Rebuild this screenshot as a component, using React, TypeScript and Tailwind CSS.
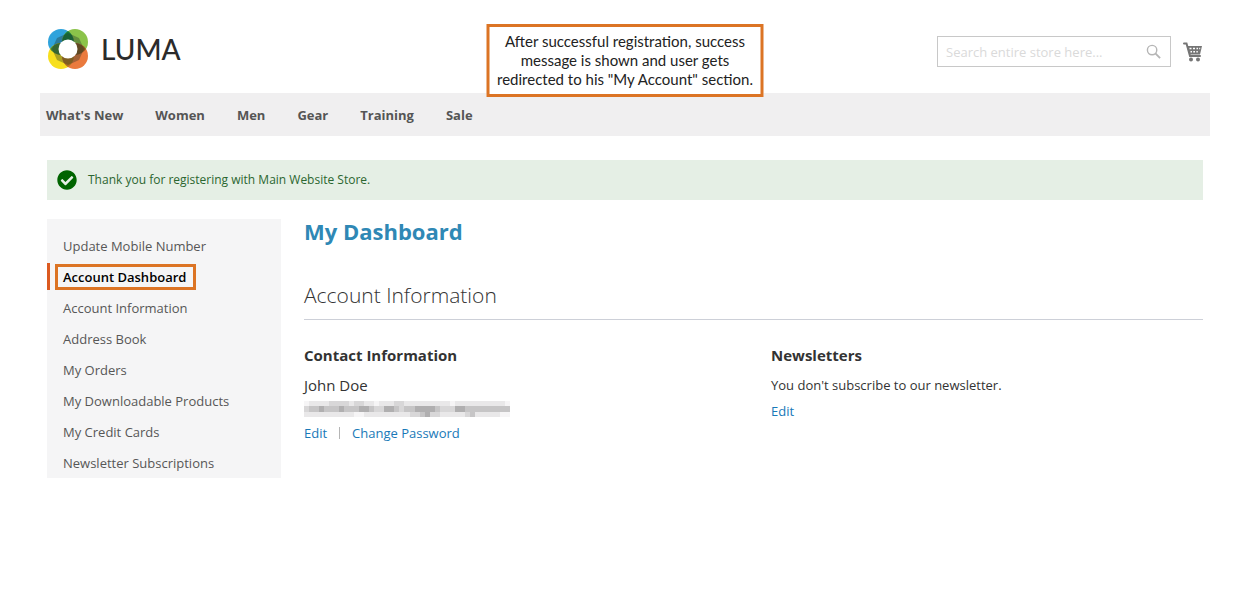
import { FaCheckCircle } from "react-icons/fa";

const navItems = ["What's New", "Women", "Men", "Gear", "Training", "Sale"];

const accountLinks = [
  "Update Mobile Number",
  "Account Dashboard",
  "Account Information",
  "Address Book",
  "My Orders",
  "My Downloadable Products",
  "My Credit Cards",
  "Newsletter Subscriptions",
];

// grey levels of the pixelated email, one string per row (0 = light, 4 = dark)
const emailPixels = [
  "01111222212211011122111111111011111111110",
  "23343334333443224432334444322244333333333",
  "11111111110011111111122342211111231111100",
];
const pixelFill = ["#f6f5f6", "#e9e8e9", "#d8d7d8", "#c6c5c6", "#b0afb0"];

const Logo = () => (
  <a href="#" className="flex items-center gap-3">
    <svg width="42" height="42" viewBox="0 0 42 42" aria-hidden="true">
      <circle cx="14" cy="14" r="13" fill="#2fa3dc" />
      <circle cx="28" cy="14" r="13" fill="#8bc34a" />
      <circle cx="14" cy="28" r="13" fill="#f7df1e" />
      <circle cx="28" cy="28" r="13" fill="#ea7a3d" />
      <path d="M21 3.1A13 13 0 0 1 21 24.9A13 13 0 0 1 21 3.1Z" fill="#157a3f" />
      <path d="M3.1 21A13 13 0 0 1 24.9 21A13 13 0 0 1 3.1 21Z" fill="#3f8038" />
      <path d="M38.9 21A13 13 0 0 1 17.1 21A13 13 0 0 1 38.9 21Z" fill="#80531f" />
      <path d="M21 38.9A13 13 0 0 1 21 17.1A13 13 0 0 1 21 38.9Z" fill="#b3761f" />
      <path d="M21 5L32 10L37 21L32 32L21 37L10 32L5 21L10 10Z" fill="#23352a" opacity="0.36" />
      <circle cx="21" cy="21" r="9.5" fill="#fff" />
    </svg>
    <span className="font-['Lato'] text-[28px] leading-8 font-medium text-[#2b2b2b]">LUMA</span>
  </a>
);

const CartIcon = () => (
  <svg width="20" height="20" viewBox="0 0 20 20" aria-hidden="true">
    <path d="M1 1.5H3.5L7 14H17" fill="none" stroke="#757575" strokeWidth="2" strokeLinecap="round" />
    <path d="M4 4H19L17 12.5H6.5Z" fill="#757575" />
    <path
      d="M6.5 6.5H8.5M10 6.5H12M13.5 6.5H15M16.2 6.5H17.2M7.5 9.7H9M10.3 9.7H12M13.4 9.7H14.8"
      stroke="#fff"
      strokeWidth="1.5"
    />
    <circle cx="8" cy="17.5" r="2" fill="#757575" />
    <circle cx="15" cy="17.5" r="2" fill="#757575" />
  </svg>
);

const Header = () => (
  <header className="relative flex items-start justify-between px-[7px] pt-7">
    <Logo />
    <p className="absolute left-1/2 top-6 w-[277px] -translate-x-1/2 border-3 border-[#dc7424] bg-white py-[5px] text-center font-['Lato'] text-[15px] leading-[19px] text-[#222]">
      After successful registration, success
      <br />
      message is shown and user gets
      <br />
      redirected to his "My Account" section.
    </p>
    <div className="flex items-center gap-3 pt-2">
      <div className="relative">
        <input
          type="search"
          aria-label="Search"
          placeholder="Search entire store here..."
          className="h-[31px] w-[234px] border border-[#c8c8c8] bg-white pl-2 pr-8 text-[13px] placeholder:text-[#dadada]"
        />
        <button aria-label="Submit search" className="absolute right-[10px] top-2">
          <svg width="15" height="15" viewBox="0 0 16 16" fill="none" stroke="#b5b5b5" strokeWidth="1.5">
            <circle cx="6.5" cy="6.5" r="5" />
            <path d="M10 10L15 15" strokeWidth="2" />
          </svg>
        </button>
      </div>
      <a href="#" aria-label="My Cart">
        <CartIcon />
      </a>
    </div>
  </header>
);

const Sidebar = () => (
  <nav className="w-[234px] shrink-0 self-start bg-[#f5f5f6] pt-[11px]">
    <ul>
      {accountLinks.map((link) =>
        link === "Account Dashboard" ? (
          <li key={link} className="flex h-[31px] items-center gap-[5px]">
            <span className="h-[27px] w-[3px] bg-[#dc5a20]"></span>
            <a
              href="#"
              className="border-3 border-[#dc7424] pl-[5px] pr-[7px] text-[13px] leading-5 font-semibold text-black"
            >
              {link}
            </a>
          </li>
        ) : (
          <li key={link} className="flex h-[31px] items-center pl-4">
            <a href="#" className="text-[13px] leading-5 text-[#575757]">
              {link}
            </a>
          </li>
        )
      )}
    </ul>
  </nav>
);

const HiddenEmail = () => (
  <svg width="206" height="16" viewBox="0 0 41 3" preserveAspectRatio="none" shapeRendering="crispEdges" aria-hidden="true">
    {emailPixels.map((row, y) =>
      row.split("").map((level, x) => (
        <rect key={`${x}-${y}`} x={x} y={y} width="1" height="1" fill={pixelFill[Number(level)]} />
      ))
    )}
  </svg>
);

const Dashboard = () => (
  <section className="min-w-0 flex-1 text-[#333]">
    <h1 className="text-[22px] leading-6 font-bold text-[#2f88b5]">My Dashboard</h1>
    <h2 className="mt-9 border-b border-[#cdd0d8] pb-2 text-[21px] leading-8 font-light">Account Information</h2>
    <div className="mt-[23px] grid grid-cols-[467px_1fr]">
      <div>
        <h3 className="text-[15px] leading-6 font-bold">Contact Information</h3>
        <p className="mt-2 text-[15px] leading-5">John Doe</p>
        <div className="mt-1.5">
          <HiddenEmail />
        </div>
        <div className="mt-1.5 flex items-center gap-3 text-[13px] leading-5 text-[#1979b8]">
          <a href="#">Edit</a>
          <span className="h-3 w-px bg-[#b5b5b5]"></span>
          <a href="#">Change Password</a>
        </div>
      </div>
      <div>
        <h3 className="text-[15px] leading-6 font-bold">Newsletters</h3>
        <p className="mt-2 text-[13px] leading-5">You don't subscribe to our newsletter.</p>
        <a href="#" className="mt-1.5 inline-block text-[13px] leading-5 text-[#1979b8]">
          Edit
        </a>
      </div>
    </div>
  </section>
);

export default function App() {
  return (
    <div className="min-h-screen bg-white px-10 font-['Open_Sans',sans-serif]">
      <Header />
      <nav className="mt-[23px] flex h-[43px] items-center gap-8 bg-[#f0eff0] px-[6px]">
        {navItems.map((item) => (
          <a key={item} href="#" className="text-[13px] leading-5 font-bold text-[#555]">
            {item}
          </a>
        ))}
      </nav>
      <main className="px-[7px] pt-6">
        <div role="status" className="flex h-10 items-center gap-[11px] bg-[#e5efe5] px-[10px]">
          <FaCheckCircle className="size-5 text-[#006400]" />
          <p className="text-[12px] leading-5 text-[#2b6630]">Thank you for registering with Main Website Store.</p>
        </div>
        <div className="mt-[19px] flex gap-[23px]">
          <Sidebar />
          <Dashboard />
        </div>
      </main>
    </div>
  );
}
